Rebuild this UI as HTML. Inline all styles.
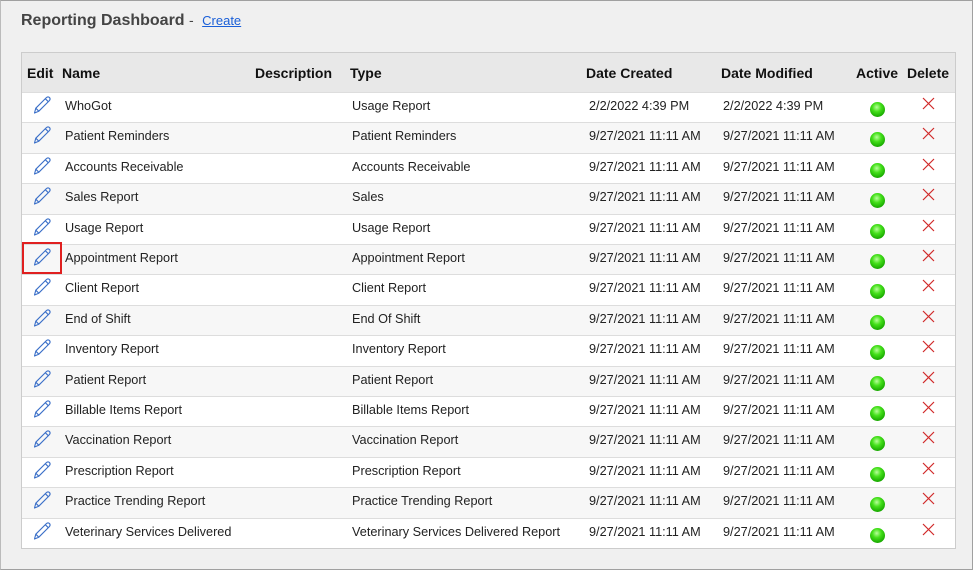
<!DOCTYPE html>
<html><head><style>
body{margin:0;width:973px;height:570px;overflow:hidden;background:#f0f0f0;font-family:"Liberation Sans",Arial,sans-serif;}
.frame{position:absolute;left:0;top:0;width:971px;height:568px;border:1px solid #a0a0a0;border-left-color:#bbb;background:#f0f0f0}
h1{position:absolute;left:21px;top:12px;margin:0;font-size:16px;font-weight:bold;color:#444}
h1 span{font-weight:normal;font-size:14px;color:#444}
h1 a{font-weight:normal;font-size:13px;color:#1a5fd8;text-decoration:underline;margin-left:4px}
.tbl{position:absolute;left:21px;top:52px;width:933px;height:495px;border:1px solid #ccc;background:#fff}
.hdr{position:absolute;left:0;top:0;width:933px;height:39px;background:#e8e8e8}
.t{position:absolute;font-size:12.7px;color:#222;white-space:nowrap}
.h{position:absolute;font-size:14px;font-weight:bold;color:#111;top:12px}
.row{position:absolute;left:0;width:933px;height:30px;border-top:1px solid #ddd}
.row.alt{background:#f7f7f7}
.dot{position:absolute;left:848px;width:15px;height:15px;border-radius:50%;background:radial-gradient(circle at 45% 35%,#b8ff9a 0,#44e01a 35%,#18a800 75%,#0c6a00 100%)}
svg{position:absolute}
</style></head><body>
<div class="frame"></div>
<h1>Reporting Dashboard <span>-</span> <a>Create</a></h1>
<div class="tbl">
<div class="hdr">
<div class="h" style="left:5px">Edit</div><div class="h" style="left:40px">Name</div><div class="h" style="left:233px">Description</div><div class="h" style="left:328px">Type</div><div class="h" style="left:564px">Date Created</div><div class="h" style="left:699px">Date Modified</div><div class="h" style="left:834px">Active</div><div class="h" style="left:885px">Delete</div>
</div>
<div id="rows"></div>
</div>
<div style="position:absolute;left:22px;top:242px;width:36px;height:28px;border:2px solid #e02020"></div>
<script>
var d=[["WhoGot","Usage Report","2/2/2022 4:39 PM"],["Patient Reminders","Patient Reminders"],["Accounts Receivable","Accounts Receivable"],["Sales Report","Sales"],["Usage Report","Usage Report"],["Appointment Report","Appointment Report"],["Client Report","Client Report"],["End of Shift","End Of Shift"],["Inventory Report","Inventory Report"],["Patient Report","Patient Report"],["Billable Items Report","Billable Items Report"],["Vaccination Report","Vaccination Report"],["Prescription Report","Prescription Report"],["Practice Trending Report","Practice Trending Report"],["Veterinary Services Delivered","Veterinary Services Delivered Report"]];
var h="";
d.forEach(function(r,i){var top=39+i*30.4;var dt=r[2]||"9/27/2021 11:11 AM";
h+='<div class="row'+(i%2?' alt':'')+'" style="top:'+top+'px">'+
'<svg width="20" height="20" viewBox="0 0 20 20" style="left:10px;top:2px"><path d="M2.5 18 L3.8 13.2 L14.5 2.5 Q16 1.3 17.5 2.5 Q18.7 4 17.5 5.5 L6.8 16.2 Z M3.8 13.2 L6.8 16.2 M13.3 3.7 L16.3 6.7" fill="none" stroke="#3a6fc8" stroke-width="1.1" stroke-linejoin="round"/></svg>'+
'<div class="t" style="left:43px;top:6px">'+r[0]+'</div><div class="t" style="left:330px;top:6px">'+r[1]+'</div><div class="t" style="left:567px;top:6px">'+dt+'</div><div class="t" style="left:701px;top:6px">'+dt+'</div><div class="dot" style="top:9px"></div>'+
'<svg width="13" height="13" viewBox="0 0 13 13" style="left:900px;top:4px"><path d="M1 1 L12 12 M12 1 L1 12" stroke="#d02828" stroke-width="1.2"/></svg></div>';});
document.getElementById("rows").innerHTML=h;
</script>
</body></html>
